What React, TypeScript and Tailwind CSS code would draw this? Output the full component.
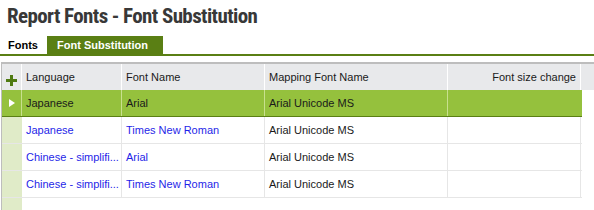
import React from "react";

type Row = {
  language: string;
  fontName: string;
  mapping: string;
  sizeChange: string;
};

const rows: Row[] = [
  { language: "Japanese", fontName: "Arial", mapping: "Arial Unicode MS", sizeChange: "" },
  { language: "Japanese", fontName: "Times New Roman", mapping: "Arial Unicode MS", sizeChange: "" },
  { language: "Chinese - simplifi...", fontName: "Arial", mapping: "Arial Unicode MS", sizeChange: "" },
  { language: "Chinese - simplifi...", fontName: "Times New Roman", mapping: "Arial Unicode MS", sizeChange: "" },
];

function PlusIcon() {
  return (
    <svg width="11" height="11" viewBox="0 0 11 11">
      <rect x="4" y="0" width="3" height="11" fill="#4f7a12" />
      <rect x="0" y="4" width="11" height="3" fill="#4f7a12" />
    </svg>
  );
}

function RowArrow() {
  return (
    <svg width="8" height="8" viewBox="0 0 8 8">
      <path d="M1 0 L7 4 L1 8 Z" fill="#ffffff" />
    </svg>
  );
}

export default function App() {
  return (
    <div
      className="w-[594px] h-[210px] overflow-hidden bg-white flex flex-col"
      style={{ fontFamily: '"Liberation Sans", Arial, sans-serif' }}
    >
      {/* Title */}
      <h1
        className="pl-[7px] pt-[4px] h-[32px] text-[21px] leading-[24px] font-bold tracking-[-0.6px] text-[#383838]"
        style={{ fontFamily: '"Liberation Sans Narrow", "Arial Narrow", "Roboto", sans-serif', fontStretch: "condensed" }}
      >
        Report Fonts - Font Substitution
      </h1>

      {/* Tabs */}
      <div className="mt-[4px] flex border-b-[2px] border-[#5a7f14] pl-[2px]">
        <div className="w-[45px] h-[18px] flex items-center pl-[6px] text-[11px] font-bold text-black bg-white">
          Fonts
        </div>
        <div className="w-[116px] h-[18px] flex items-center pl-[10px] text-[11px] font-bold text-white bg-[#5a7f14]">
          Font Substitution
        </div>
      </div>

      {/* Grid */}
      <div className="mt-[6px] ml-[1px] flex-1 flex flex-col border-t-2 border-l border-[#bdbdbd] text-[11px]">
        {/* Header */}
        <div className="flex h-[26px] bg-[#e8e9eb] text-[#1a1a1a]">
          <div className="w-[20px] flex items-end justify-center pb-[4px] border-r border-white">
            <PlusIcon />
          </div>
          <div className="w-[100px] flex items-center pl-[4px] border-r border-white">Language</div>
          <div className="w-[143px] flex items-center pl-[4px] border-r border-white">Font Name</div>
          <div className="w-[183px] flex items-center pl-[4px] border-r border-white">Mapping Font Name</div>
          <div className="w-[133px] flex items-center justify-end pr-[4px] border-r border-white">
            Font size change
          </div>
          <div className="flex-1" />
        </div>

        {/* Rows */}
        {rows.map((row, i) => {
          const selected = i === 0;
          return (
            <div
              key={i}
              className={
                selected
                  ? "flex h-[27px] w-[580px] bg-[#95c13d] text-[#1a1a1a] border-b border-[#5a7f14]"
                  : "flex h-[27px] w-[580px] bg-white text-[#1f1fe8] border-b border-[#e6e6e6]"
              }
            >
              <div
                className={
                  selected
                    ? "w-[20px] flex items-center justify-center border-r border-[#c8e08e]"
                    : "w-[20px] bg-[#e0ebc8]"
                }
              >
                {selected && <RowArrow />}
              </div>
              <div
                className={
                  selected
                    ? "w-[100px] flex items-center pl-[4px] border-r border-[#c8e08e] whitespace-nowrap"
                    : "w-[100px] flex items-center pl-[4px] border-r border-[#e6e6e6] whitespace-nowrap"
                }
              >
                {row.language}
              </div>
              <div
                className={
                  selected
                    ? "w-[143px] flex items-center pl-[4px] border-r border-[#c8e08e]"
                    : "w-[143px] flex items-center pl-[4px] border-r border-[#e6e6e6]"
                }
              >
                {row.fontName}
              </div>
              <div
                className={
                  selected
                    ? "w-[183px] flex items-center pl-[4px] border-r border-[#c8e08e]"
                    : "w-[183px] flex items-center pl-[4px] border-r border-[#e6e6e6] text-[#1a1a1a]"
                }
              >
                {row.mapping}
              </div>
              <div
                className={
                  selected
                    ? "w-[133px] flex items-center justify-end pr-[4px] border-r border-[#95c13d]"
                    : "w-[133px] flex items-center justify-end pr-[4px] border-r border-[#e6e6e6]"
                }
              >
                {row.sizeChange}
              </div>
            </div>
          );
        })}

        {/* Filler below rows */}
        <div className="flex-1 flex">
          <div className="w-[20px] bg-[#e0ebc8]" />
        </div>
      </div>
    </div>
  );
}
